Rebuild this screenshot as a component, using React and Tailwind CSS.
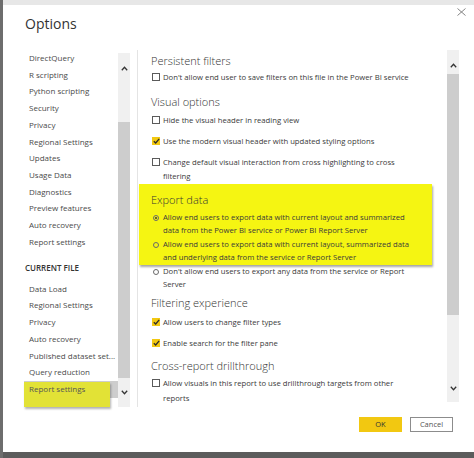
import React from "react";

const navTop = [
  "DirectQuery",
  "R scripting",
  "Python scripting",
  "Security",
  "Privacy",
  "Regional Settings",
  "Updates",
  "Usage Data",
  "Diagnostics",
  "Preview features",
  "Auto recovery",
  "Report settings",
];

const navFile = [
  "Data Load",
  "Regional Settings",
  "Privacy",
  "Auto recovery",
  "Published dataset set...",
  "Query reduction",
];

const Chevron = ({ down }) => (
  <svg width="7" height="5" viewBox="0 0 7 5" className={down ? "rotate-180" : ""}>
    <path d="M0.8 4.2 L3.5 1.3 L6.2 4.2" fill="none" stroke="#333" strokeWidth="1.3" />
  </svg>
);

const Box = ({ checked }) =>
  checked ? (
    <span className="mt-[3px] flex h-[8px] w-[8px] shrink-0 items-center justify-center bg-[#f2c811]">
      <svg width="7" height="6" viewBox="0 0 7 6">
        <path d="M0.8 3.2 L2.7 5 L6.2 0.9" fill="none" stroke="#2b2b2b" strokeWidth="1.3" />
      </svg>
    </span>
  ) : (
    <span className="mt-[3px] h-[8px] w-[8px] shrink-0 border border-[#5a5a5a] bg-white" />
  );

const Radio = ({ selected }) => (
  <span className="mt-[3.5px] flex h-[7px] w-[8px] shrink-0 items-center justify-center">
    <span className="flex h-[6px] w-[6px] items-center justify-center rounded-full border border-[#6a6a6a]">
      {selected && <span className="h-[2px] w-[2px] rounded-full bg-[#333]" />}
    </span>
  </span>
);

const Check = ({ lines, checked, className = "" }) => (
  <div className={`flex items-start gap-[3px] ${className}`}>
    <Box checked={checked} />
    <div className="whitespace-nowrap text-[7.7px] leading-[14.5px] text-[#3a3a3a]">
      {lines.map((l) => (
        <div key={l}>{l}</div>
      ))}
    </div>
  </div>
);

const RadioOption = ({ lines, selected, className = "" }) => (
  <div className={`flex items-start gap-[3px] ${className}`}>
    <Radio selected={selected} />
    <div className="whitespace-nowrap text-[7.7px] leading-[13.5px] text-[#3a3a3a]">
      {lines.map((l) => (
        <div key={l}>{l}</div>
      ))}
    </div>
  </div>
);

const Heading = ({ children, className = "" }) => (
  <div className={`text-[11px] font-light leading-[18px] text-[#333] ${className}`}>{children}</div>
);

export default function App() {
  return (
    <div className="flex h-[458px] w-[474px] flex-col overflow-hidden border-l-[3px] border-[#6d6d6d] font-['Open_Sans','Noto_Sans',sans-serif]">
      <div className="h-[5px] bg-[#e7e7e7]" />

      <div className="flex flex-1 flex-col bg-white">
        {/* header */}
        <div className="flex h-[45px] items-start justify-between">
          <div className="pl-[22px] pt-[10px] text-[14px] leading-[18px] text-[#333]">Options</div>
          <svg width="9" height="8" viewBox="0 0 9 8" className="mr-[8px] mt-[3px]">
            <path d="M0.5 0.5 L8.5 7.5 M8.5 0.5 L0.5 7.5" stroke="#777" strokeWidth="0.9" />
          </svg>
        </div>

        {/* body */}
        <div className="flex h-[357px] pl-[21px]">
          {/* nav */}
          <div className="w-[94px] text-[8px] text-[#4a4a4a]">
            {navTop.map((n) => (
              <div key={n} className="pl-[5px] leading-[16.7px]">
                {n}
              </div>
            ))}
            <div className="h-[30.3px] pl-[1px] pt-[9.5px] font-semibold leading-[16px] text-[#333]">
              CURRENT FILE
            </div>
            {navFile.map((n) => (
              <div key={n} className="pl-[5px] leading-[16.7px]">
                {n}
              </div>
            ))}
            <div className="relative h-[16.7px] bg-[#cdcdcd]">
              <div className="absolute left-0 top-[1.3px] h-[25px] w-[86px] bg-[#e2e236] pl-[5px] leading-[14px] text-[#555] shadow-[1px_2px_2px_rgba(0,0,0,0.3)]">
                Report settings
              </div>
            </div>
          </div>

          {/* left scrollbar */}
          <div className="mt-[3px] flex w-[12px] flex-col bg-[#f0f0f0]">
            <div className="flex h-[69px] justify-center pt-[13px]">
              <Chevron />
            </div>
            <div className="h-[256px] bg-[#cdcdcd]" />
            <div className="flex flex-1 items-center justify-center">
              <Chevron down />
            </div>
          </div>

          <div className="ml-[7px] w-[1px] bg-[#e4e4e4]" />

          {/* content */}
          <div className="flex w-[309px] flex-col">
            <div className="pl-[13px]">
              <Heading className="mt-[2px]">Persistent filters</Heading>
            </div>
            <Check className="pl-[14px]" lines={["Don't allow end user to save filters on this file in the Power BI service"]} />
            <div className="pl-[13px]">
              <Heading className="mt-[8px]">Visual options</Heading>
            </div>
            <Check className="mt-[2px] pl-[14px]" lines={["Hide the visual header in reading view"]} />
            <Check className="mt-[6.5px] pl-[14px]" checked lines={["Use the modern visual header with updated styling options"]} />
            <Check
              className="mt-[6.5px] pl-[14px]"
              lines={["Change default visual interaction from cross highlighting to cross", "filtering"]}
            />

            <div className="ml-[1px] w-[293px] bg-[#f5f512] pl-[12px] pt-[7px] shadow-[1px_2px_2px_rgba(0,0,0,0.35)]">
              <Heading>Export data</Heading>
              <RadioOption
                className="mt-[2px] pl-[1px]"
                selected
                lines={[
                  "Allow end users to export data with current layout and summarized",
                  "data from the Power BI service or Power BI Report Server",
                ]}
              />
              <RadioOption
                className="pl-[1px]"
                lines={[
                  "Allow end users to export data with current layout, summarized data",
                  "and underlying data from the service or Report Server",
                ]}
              />
            </div>
            <RadioOption
              className="pl-[14px]"
              lines={["Don't allow end users to export any data from the service or Report", "Server"]}
            />

            <div className="pl-[13px]">
              <Heading className="mt-[2px]">Filtering experience</Heading>
            </div>
            <Check className="mt-[3px] pl-[14px]" checked lines={["Allow users to change filter types"]} />
            <Check className="mt-[6.5px] pl-[14px]" checked lines={["Enable search for the filter pane"]} />
            <div className="pl-[13px]">
              <Heading className="mt-[7px]">Cross-report drillthrough</Heading>
            </div>
            <Check
              className="mt-[1px] pl-[14px]"
              lines={["Allow visuals in this report to use drillthrough targets from other", "reports"]}
            />
          </div>

          {/* right scrollbar */}
          <div className="flex h-[352px] w-[12px] flex-col bg-[#f0f0f0]">
            <div className="flex h-[24px] justify-center pt-[13px]">
              <Chevron />
            </div>
            <div className="h-[241px] bg-[#cdcdcd]" />
            <div className="flex flex-1 justify-center pt-[71px]">
              <Chevron down />
            </div>
          </div>
        </div>

        {/* footer */}
        <div className="flex h-[45px] justify-end gap-[8px] pr-[21px] pt-[10px]">
          <button className="h-[15px] w-[43px] bg-[#f2c811] text-[7.5px] text-[#333]">OK</button>
          <button className="h-[15px] w-[43px] border border-[#8c8c8c] bg-white text-[7.5px] text-[#555]">
            Cancel
          </button>
        </div>
      </div>

      <div className="h-[6px] bg-[#5c5c5c]" />
    </div>
  );
}
